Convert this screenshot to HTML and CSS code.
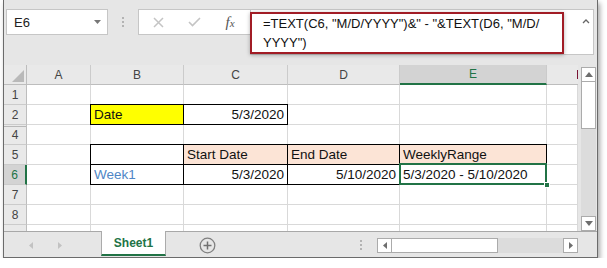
FILE: index.html
```html
<!DOCTYPE html>
<html>
<head>
<meta charset="utf-8">
<link rel="stylesheet" href="styles.css">
</head>
<body>
<div class="window">
  <div class="fbar">
    <div class="namebox"><span>E6</span><svg class="dd" width="7" height="4" viewBox="0 0 7 4"><path d="M0 0H7L3.5 4Z" fill="#777"/></svg></div>
    <div class="sep"><i></i><i></i><i></i></div>
    <div class="btns">
      <span class="bslot"><svg width="11" height="11" viewBox="0 0 11 11"><path d="M1 1L10 10M10 1L1 10" stroke="#c4c4c4" stroke-width="1.5"/></svg></span>
      <span class="bslot"><svg width="13" height="10" viewBox="0 0 13 10"><path d="M1 5L4.5 8.5L12 1" stroke="#c4c4c4" stroke-width="1.6" fill="none"/></svg></span>
      <span class="bslot fx">f<span class="fxx">x</span></span>
    </div>
    <div class="formula">
      <div class="fedit">=TEXT(C6, "M/D/YYYY")&amp;" - "&amp;TEXT(D6, "M/D/<br>YYYY")</div>
      <svg class="caret" width="8" height="5" viewBox="0 0 8 5"><path d="M1 4L4 1L7 4" stroke="#666" stroke-width="1.3" fill="none"/></svg>
    </div>
  </div>
  <div class="main">
    <div class="sheet">
      <div class="corner"><svg width="12" height="12" viewBox="0 0 12 12"><path d="M12 0V12H0Z" fill="#b9b9b9"/></svg></div>
      <div class="ch">A</div><div class="ch">B</div><div class="ch">C</div><div class="ch">D</div><div class="ch sel-h">E</div><div class="ch chf"></div>

      <div class="rh">1</div><div class="c"></div><div class="c"></div><div class="c"></div><div class="c"></div><div class="c"></div><div class="c"></div>

      <div class="rh">2</div><div class="c"></div><div class="c bx yellow">Date</div><div class="c bx r">5/3/2020</div><div class="c"></div><div class="c"></div><div class="c"></div>

      <div class="rh hid">4</div><div class="c"></div><div class="c"></div><div class="c"></div><div class="c"></div><div class="c"></div><div class="c"></div>

      <div class="rh">5</div><div class="c"></div><div class="c bx"></div><div class="c bx peach">Start Date</div><div class="c bx peach">End Date</div><div class="c bx peach">WeeklyRange</div><div class="c"></div>

      <div class="rh sel-r">6</div><div class="c"></div><div class="c bx blue">Week1</div><div class="c bx r">5/3/2020</div><div class="c bx r">5/10/2020</div><div class="c bx">5/3/2020 - 5/10/2020</div><div class="c"></div>

      <div class="rh">7</div><div class="c"></div><div class="c"></div><div class="c"></div><div class="c"></div><div class="c"></div><div class="c"></div>

      <div class="rh">8</div><div class="c"></div><div class="c"></div><div class="c"></div><div class="c"></div><div class="c"></div><div class="c"></div>

      <div class="rh"></div><div class="c"></div><div class="c"></div><div class="c"></div><div class="c"></div><div class="c"></div><div class="c"></div>

      <div class="selbox"><div class="handle"></div></div>
    </div>
    <div class="vscroll">
      <div class="sbtn"><svg width="8" height="5" viewBox="0 0 8 5"><path d="M0 5H8L4 0Z" fill="#6e6e6e"/></svg></div>
      <div class="vthumb"></div>
      <div class="vtrack"></div>
      <div class="sbtn"><svg width="8" height="5" viewBox="0 0 8 5"><path d="M0 0H8L4 5Z" fill="#6e6e6e"/></svg></div>
    </div>
  </div>
  <div class="tabbar">
    <div class="nav">
      <svg width="4" height="7" viewBox="0 0 4 7"><path d="M4 0V7L0 3.5Z" fill="#c2c2c2"/></svg>
      <svg width="4" height="7" viewBox="0 0 4 7"><path d="M0 0V7L4 3.5Z" fill="#c2c2c2"/></svg>
    </div>
    <div class="tab">Sheet1</div>
    <svg class="plus" width="17" height="17" viewBox="0 0 17 17"><circle cx="8.5" cy="8.5" r="7.3" fill="none" stroke="#808080" stroke-width="1.3"/><path d="M8.5 4.5V12.5M4.5 8.5H12.5" stroke="#707070" stroke-width="1.5"/></svg>
    <div class="hdots"><i></i><i></i><i></i></div>
    <div class="hscroll">
      <div class="hbtn"><svg width="4" height="7" viewBox="0 0 4 7"><path d="M4 0V7L0 3.5Z" fill="#6e6e6e"/></svg></div>
      <div class="hthumb"></div>
      <div class="htrack"></div>
      <div class="hbtn"><svg width="4" height="7" viewBox="0 0 4 7"><path d="M0 0V7L4 3.5Z" fill="#6e6e6e"/></svg></div>
    </div>
  </div>
</div>
</body>
</html>
```

FILE: styles.css
```css
* { box-sizing: border-box; }
body { margin: 0; background: #fff; font-family: "Liberation Sans", Arial, sans-serif; }

.window {
  margin-left: 3px;
  width: 595px;
  height: 258px;
  background: #e6e6e6;
  border: 1px solid #6b6b6b;
  border-top: none;
  box-shadow: 2px 3px 5px rgba(0,0,0,.35);
  display: flex;
  flex-direction: column;
}

/* formula bar */
.fbar { height: 65px; flex: none; display: flex; align-items: flex-start; padding: 9px 0 0 2px; }
.namebox {
  width: 102px; height: 26px; background: #fff; border: 1px solid #c6c6c6;
  display: flex; align-items: center; justify-content: space-between;
  padding: 0 6px 0 7px; font-size: 13px; color: #222;
}
.sep { width: 30px; height: 26px; display: flex; flex-direction: column; align-items: center; justify-content: center; gap: 2px; }
.sep i { display: block; width: 2px; height: 2px; background: #b3b3b3; }
.btns {
  width: 112px; height: 26px; background: #fff; border: 1px solid #c6c6c6; border-right: none;
  display: flex; align-items: center; padding-left: 1px;
}
.bslot { width: 36px; display: flex; justify-content: center; align-items: center; }
.fx { font-family: "Liberation Serif", serif; font-style: italic; font-size: 15px; color: #555; }
.fxx { font-size: 11px; position: relative; top: 1px; }
.formula {
  width: 344px; height: 46px; background: #fff; border: 1px solid #c6c6c6;
  display: flex; align-items: flex-start;
}
.fedit {
  width: 314px; height: 42px; margin: 2px 0 0 -1px;
  border: 2px solid #a11c25;
  box-shadow: 0 1px 4px rgba(0,0,0,.3);
  background: #fff;
  padding: 0 0 0 11px;
  font-size: 13px; line-height: 19px; color: #111; white-space: nowrap;
}
.caret { margin: 9px 0 0 18px; }

/* main grid */
.main { height: 166px; flex: none; display: flex; }
.sheet {
  width: 574px; height: 166px; overflow: hidden; position: relative;
  display: grid;
  grid-template-columns: 23px 64px 93px 104px 112px 147px 31px;
  grid-auto-rows: 20px;
  background: #fff;
}
.corner, .ch, .rh { background: #e9e9e9; color: #444; font-size: 12px; }
.corner { border-right: 1px solid #bdbdbd; border-bottom: 1px solid #bdbdbd; display: flex; align-items: flex-end; justify-content: flex-end; padding: 0 2px 2px 0; }
.ch { border-right: 1px solid #cbcbcb; border-bottom: 1px solid #bdbdbd; display: flex; align-items: center; justify-content: center; }
.chf { border-right: none; position: relative; }
.chf::after { content: ""; position: absolute; right: 0; top: 5px; width: 1px; height: 9px; background: #7a1434; }
.rh { border-right: 1px solid #bdbdbd; border-bottom: 1px solid #cbcbcb; display: flex; align-items: center; justify-content: center; padding-top: 1px; }
.rh.hid { background: linear-gradient(#e9e9e9 1px, #b8b8b8 1px, #b8b8b8 2px, #e9e9e9 2px); }
.sel-h { background: #d3d3d3; color: #217346; border-bottom: 2px solid #217346; }
.sel-r { background: #d3d3d3; color: #217346; border-right: 2px solid #217346; }

.c {
  border-right: 1px solid #d9d9d9; border-bottom: 1px solid #d9d9d9;
  font-size: 13.5px; line-height: 19px; padding: 0 3px; white-space: nowrap; color: #111;
}
.c.r { text-align: right; }
.c.bx { border-right-color: #000; border-bottom-color: #000; box-shadow: -1px -1px 0 #000, 0 -1px 0 #000, -1px 0 0 #000; }
.yellow { background: #ffff00; }
.peach { background: #fce4d6; }
.blue { color: #4f86c6; }

.selbox {
  position: absolute; left: 395px; top: 98px; width: 148px; height: 22px;
  border: 2px solid #217346;
}
.handle {
  position: absolute; right: -5px; bottom: -5px; width: 6px; height: 6px;
  background: #217346; border: 1px solid #fff;
}

.vscroll { width: 15px; margin-left: 3px; padding-top: 2px; display: flex; flex-direction: column; }
.sbtn { height: 15px; flex: none; background: #fff; border: 1px solid #ababab; display: flex; align-items: center; justify-content: center; }
.vthumb { height: 47px; flex: none; background: #fff; border: 1px solid #ababab; border-top: none; }
.vtrack { flex: 1; background: #dcdcdc; }

/* tab bar */
.tabbar { flex: 1; border-top: 1px solid #a8a8a8; display: flex; align-items: flex-start; }
.nav { width: 97px; display: flex; gap: 25px; padding: 10px 0 0 25px; }
.tab {
  width: 65px; height: 25px; margin-top: -1px; background: #fff;
  border-left: 1px solid #ababab; border-right: 1px solid #ababab; border-bottom: 2px solid #217346;
  color: #217346; font-weight: bold; font-size: 12px; text-align: center; line-height: 22px; padding-top: 1px;
}
.plus { margin: 5px 0 0 33px; }
.hdots { margin: 8px 0 0 144px; display: flex; flex-direction: column; gap: 2px; }
.hdots i { display: block; width: 2px; height: 2px; background: #b3b3b3; }
.hscroll { margin: 6px 0 0 15px; width: 201px; height: 15px; display: flex; }
.hbtn { width: 15px; flex: none; background: #fff; border: 1px solid #ababab; display: flex; align-items: center; justify-content: center; }
.hthumb { width: 106px; flex: none; background: #fff; border: 1px solid #ababab; border-left: none; }
.htrack { flex: 1; background: #dcdcdc; }
```
